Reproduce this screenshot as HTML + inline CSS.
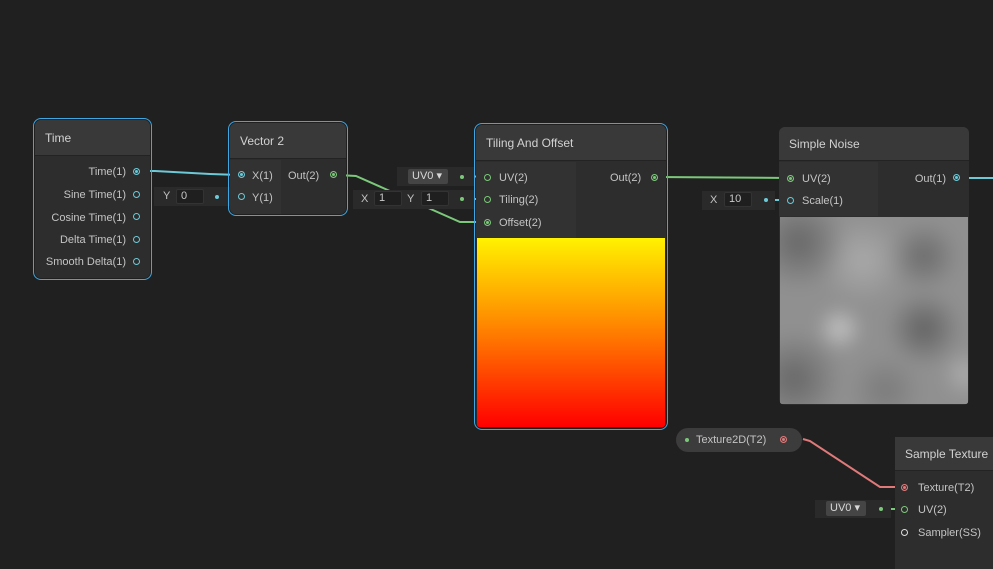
<!DOCTYPE html>
<html><head><style>
*{margin:0;padding:0;box-sizing:border-box}
html,body{width:993px;height:569px;overflow:hidden}
body{background:#202020;position:relative;font-family:"Liberation Sans",sans-serif;font-size:11px;color:#c4c4c4}
.a{position:absolute}
.node{position:absolute;background:#2d2d2d;border-radius:6px;overflow:hidden}
.sel{outline:1.5px solid #3ea6e2;outline-offset:1px}
.hdr{position:absolute;left:0;right:0;top:0;background:#393939;color:#d2d2d2;font-size:12px;padding-left:10px;border-bottom:1px solid #232323}
.t{position:absolute;white-space:nowrap}
.port{position:absolute;width:7px;height:7px;border-radius:50%;border:1.5px solid}
.field{position:absolute;background:#2a2a2a;height:19px}
.box{position:absolute;background:#1f1f1f;border:1px solid #333;border-radius:2px;height:15px;color:#c8c8c8;padding-left:4px;line-height:13px}
.dd{position:absolute;background:#454545;border-radius:2px;height:15px;color:#d8d8d8;padding-left:4px;line-height:15px}
.dot{position:absolute;width:4px;height:4px;border-radius:50%}
</style></head><body>
<svg class="a" style="left:0;top:0" width="993" height="569">
<g fill="none" stroke-width="2">
<path d="M140 171 L155 171 L210 174 L240 175" stroke="#6cc9d8"/>
<path d="M217 197 L240 197" stroke="#6cc9d8"/>
<path d="M338 175 L356 176 L460 222 L488 222" stroke="#7bc87a"/>
<path d="M462 176 L488 177" stroke="#7bc87a"/>
<path d="M462 199 L488 199" stroke="#7bc87a"/>
<path d="M656 177 L790 178" stroke="#7bc87a"/>
<path d="M767 200 L792 200" stroke="#6cc9d8"/>
<path d="M960 178 L993 178" stroke="#6cc9d8"/>
<path d="M803 439 L810 441 L880 487 L905 487" stroke="#e07a7a"/>
<path d="M880 509 L905 509" stroke="#7bc87a"/>
</g></svg>

<div class="node sel" style="left:35px;top:120px;width:115px;height:158px">
<div class="hdr" style="height:36px;line-height:36px;font-size:12px">Time</div>
<div class="t" style="right:24px;top:46px">Time(1)</div>
<div class="t" style="right:24px;top:69px">Sine Time(1)</div>
<div class="t" style="right:24px;top:92px">Cosine Time(1)</div>
<div class="t" style="right:24px;top:114px">Delta Time(1)</div>
<div class="t" style="right:24px;top:136px">Smooth Delta(1)</div>
</div>
<div class="port" style="left:133px;top:168px;border-color:#6cc9d8;background:#6cc9d8;box-shadow:inset 0 0 0 1px #2d2d2d"></div>
<div class="port" style="left:133px;top:191px;border-color:#6cc9d8"></div>
<div class="port" style="left:133px;top:213px;border-color:#6cc9d8"></div>
<div class="port" style="left:133px;top:236px;border-color:#6cc9d8"></div>
<div class="port" style="left:133px;top:258px;border-color:#6cc9d8"></div>

<div class="field" style="left:154px;top:187px;width:76px"></div>
<div class="t" style="left:163px;top:190px">Y</div>
<div class="box" style="left:176px;top:189px;width:28px">0</div>
<div class="dot" style="left:215px;top:195px;background:#6cc9d8"></div>

<div class="node sel" style="left:230px;top:123px;width:116px;height:91px">
<div class="hdr" style="height:36px;line-height:36px">Vector 2</div>
<div class="a" style="left:0;top:37px;width:51px;bottom:0;background:#323232"></div>
<div class="t" style="left:22px;top:47px">X(1)</div>
<div class="t" style="left:22px;top:69px">Y(1)</div>
<div class="t" style="left:58px;top:47px">Out(2)</div>
</div>
<div class="port" style="left:238px;top:171px;border-color:#6cc9d8;background:#6cc9d8;box-shadow:inset 0 0 0 1px #323232"></div>
<div class="port" style="left:238px;top:193px;border-color:#6cc9d8"></div>
<div class="port" style="left:330px;top:171px;border-color:#7bc87a;background:#7bc87a;box-shadow:inset 0 0 0 1px #2d2d2d"></div>

<div class="field" style="left:397px;top:167px;width:77px"></div>
<div class="dd" style="left:408px;top:169px;width:40px">UV0 ▾</div>
<div class="dot" style="left:460px;top:175px;background:#7bc87a"></div>
<div class="field" style="left:353px;top:190px;width:121px"></div>
<div class="t" style="left:361px;top:193px">X</div>
<div class="box" style="left:374px;top:191px;width:28px">1</div>
<div class="t" style="left:407px;top:193px">Y</div>
<div class="box" style="left:421px;top:191px;width:28px">1</div>
<div class="dot" style="left:460px;top:197px;background:#7bc87a"></div>

<div class="node sel" style="left:476px;top:125px;width:190px;height:303px">
<div class="hdr" style="height:36px;line-height:36px">Tiling And Offset</div>
<div class="a" style="left:0;top:37px;width:100px;height:76px;background:#323232"></div>
<div class="t" style="left:23px;top:47px">UV(2)</div>
<div class="t" style="left:23px;top:69px">Tiling(2)</div>
<div class="t" style="left:23px;top:92px">Offset(2)</div>
<div class="t" style="left:134px;top:47px">Out(2)</div>
<div class="a" style="left:1px;right:1px;top:113px;bottom:1px;background:linear-gradient(#fff200,#ff8a00 45%,#ff0000)"></div>
</div>
<div class="port" style="left:484px;top:174px;border-color:#7bc87a"></div>
<div class="port" style="left:484px;top:196px;border-color:#7bc87a"></div>
<div class="port" style="left:484px;top:219px;border-color:#7bc87a;background:#7bc87a;box-shadow:inset 0 0 0 1px #323232"></div>
<div class="port" style="left:651px;top:174px;border-color:#7bc87a;background:#7bc87a;box-shadow:inset 0 0 0 1px #2d2d2d"></div>

<div class="field" style="left:702px;top:191px;width:73px"></div>
<div class="t" style="left:710px;top:194px">X</div>
<div class="box" style="left:724px;top:192px;width:28px">10</div>
<div class="dot" style="left:764px;top:198px;background:#6cc9d8"></div>

<div class="node" style="left:779px;top:127px;width:190px;height:278px">
<div class="hdr" style="height:34px;line-height:34px">Simple Noise</div>
<div class="a" style="left:0;top:35px;width:99px;height:54px;background:#323232"></div>
<div class="t" style="left:23px;top:46px">UV(2)</div>
<div class="t" style="left:23px;top:68px">Scale(1)</div>
<div class="t" style="right:23px;top:46px">Out(1)</div>
<div class="a" style="left:1px;right:1px;top:90px;bottom:1px;overflow:hidden;background:#909090">
<div class="a" style="left:-20px;top:-20px;right:-20px;bottom:-20px;filter:blur(8px);background:
radial-gradient(circle at 35% 58%,#c8c8c8 0,transparent 12%),
radial-gradient(circle at 17% 20%,#666 0,transparent 18%),
radial-gradient(circle at 72% 26%,#6a6a6a 0,transparent 15%),
radial-gradient(circle at 72% 58%,#606060 0,transparent 18%),
radial-gradient(circle at 15% 80%,#666 0,transparent 18%),
radial-gradient(circle at 55% 85%,#7a7a7a 0,transparent 16%),
radial-gradient(circle at 90% 78%,#b0b0b0 0,transparent 9%),
radial-gradient(circle at 45% 28%,#aaa 0,transparent 22%),
#909090"></div>
</div>
</div>
<div class="port" style="left:787px;top:175px;border-color:#7bc87a;background:#7bc87a;box-shadow:inset 0 0 0 1px #323232"></div>
<div class="port" style="left:787px;top:197px;border-color:#6cc9d8"></div>
<div class="port" style="left:953px;top:174px;border-color:#6cc9d8;background:#6cc9d8;box-shadow:inset 0 0 0 1px #2d2d2d"></div>

<div class="a" style="left:676px;top:428px;width:126px;height:24px;border-radius:12px;background:#3c3c3c"></div>
<div class="dot" style="left:685px;top:438px;background:#7bc87a"></div>
<div class="t" style="left:696px;top:434px">Texture2D(T2)</div>
<div class="port" style="left:780px;top:436px;border-color:#e07a7a;background:#e07a7a;box-shadow:inset 0 0 0 1px #3c3c3c"></div>

<div class="node" style="left:895px;top:437px;width:110px;height:132px;border-radius:0">
<div class="hdr" style="height:34px;line-height:34px">Sample Texture</div>
<div class="t" style="left:23px;top:45px">Texture(T2)</div>
<div class="t" style="left:23px;top:67px">UV(2)</div>
<div class="t" style="left:23px;top:90px">Sampler(SS)</div>
</div>
<div class="port" style="left:901px;top:484px;border-color:#e07a7a;background:#e07a7a;box-shadow:inset 0 0 0 1px #2d2d2d"></div>
<div class="port" style="left:901px;top:506px;border-color:#7bc87a"></div>
<div class="port" style="left:901px;top:529px;border-color:#ddd"></div>

<div class="field" style="left:815px;top:500px;width:76px;height:18px"></div>
<div class="dd" style="left:826px;top:501px;width:40px">UV0 ▾</div>
<div class="dot" style="left:879px;top:507px;background:#7bc87a"></div>
</body></html>
